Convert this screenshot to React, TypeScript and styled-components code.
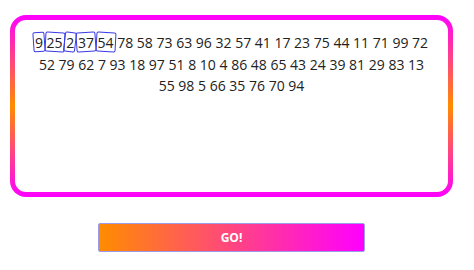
import React from "react";
import styled, { createGlobalStyle } from "styled-components";

const Global = createGlobalStyle`
  html, body { margin: 0; padding: 0; background: #fff; }
  body { font-family: "Open Sans", "Noto Sans", sans-serif; }
`;

const Page = styled.div`
  width: 463px;
  padding-top: 15px;
  display: flex;
  flex-direction: column;
  align-items: center;
`;

const Board = styled.div`
  box-sizing: border-box;
  width: 443px;
  height: 182px;
  border: 5px solid transparent;
  border-radius: 16px;
  background:
    linear-gradient(#fff, #fff) padding-box,
    linear-gradient(to bottom, #ff00ff 0%, #ff8c00 50%, #ff00ff 100%) border-box;
  padding: 12px 18px 0;
  text-align: center;
  font-size: 14px;
  line-height: 21.5px;
  color: #222;
`;

const Num = styled.span<{ $tilt?: number }>`
  position: relative;
  &::after {
    content: ${(p) => (p.$tilt !== undefined ? "''" : "none")};
    position: absolute;
    left: -2px;
    right: -2px;
    top: -1px;
    bottom: 0px;
    border: 1.2px solid #3a3ae6;
    border-radius: 2px;
    transform: rotate(${(p) => p.$tilt ?? 0}deg);
  }
`;

const GoButton = styled.button`
  margin-top: 26px;
  width: 267px;
  height: 29px;
  border: 1px solid #9a9ae8;
  border-radius: 2px;
  background: linear-gradient(to right, #ff8c00, #ff00ff);
  color: #fff;
  font-family: "Open Sans", "Noto Sans", sans-serif;
  font-weight: 700;
  font-size: 12px;
  padding: 0;
  cursor: pointer;
`;

const numbers = [
  9, 25, 2, 37, 54, 78, 58, 73, 63, 96, 32, 57, 41, 17, 23, 75, 44, 11, 71, 99, 72,
  52, 79, 62, 7, 93, 18, 97, 51, 8, 10, 4, 86, 48, 65, 43, 24, 39, 81, 29, 83, 13,
  55, 98, 5, 66, 35, 76, 70, 94,
];

const tilts = [-4, 3, 7, -4, 3];

export default function App() {
  return (
    <>
      <Global />
      <Page>
        <Board>
          {numbers.map((n, i) => (
            <React.Fragment key={i}>
              <Num $tilt={i < 5 ? tilts[i] : undefined}>{n}</Num>
              {i < numbers.length - 1 ? " " : ""}
            </React.Fragment>
          ))}
        </Board>
        <GoButton>GO!</GoButton>
      </Page>
    </>
  );
}
